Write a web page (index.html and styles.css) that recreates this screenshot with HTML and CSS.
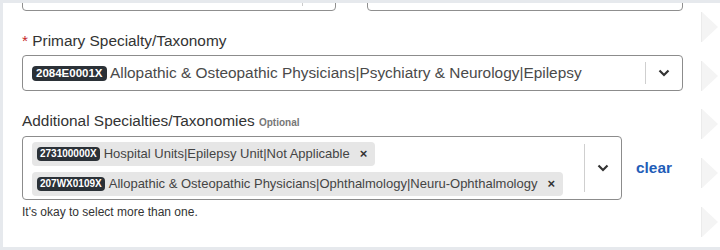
FILE: index.html
```html
<!DOCTYPE html>
<html>
<head>
<meta charset="utf-8">
<link rel="stylesheet" href="styles.css">
</head>
<body>
<div class="frame">
  <div class="panel">
    <div class="content">
      <div class="top-row">
        <div class="stub stub-a"><span class="stub-sep"></span></div>
        <div class="stub stub-b"></div>
      </div>

      <div class="label"><span class="req">*</span> Primary Specialty/Taxonomy</div>
      <div class="select">
        <div class="value"><span class="code">2084E0001X</span> Allopathic &amp; Osteopathic Physicians|Psychiatry &amp; Neurology|Epilepsy</div>
        <span class="sep"></span>
        <span class="chev"><svg width="12" height="8" viewBox="0 0 12 8"><path d="M1.5 1.5 L6 6 L10.5 1.5" fill="none" stroke="#333" stroke-width="2.2"/></svg></span>
      </div>

      <div class="label label-2">Additional Specialties/Taxonomies <span class="opt">Optional</span></div>
      <div class="multi-row">
        <div class="multi">
          <div class="chips">
            <div class="chip"><span class="code sm">273100000X</span> Hospital Units|Epilepsy Unit|Not Applicable <span class="x">×</span></div>
            <div class="chip"><span class="code sm">207WX0109X</span> Allopathic &amp; Osteopathic Physicians|Ophthalmology|Neuru-Ophthalmology <span class="x">×</span></div>
          </div>
          <span class="sep sep-tall"></span>
          <span class="chev"><svg width="12" height="8" viewBox="0 0 12 8"><path d="M1.5 1.5 L6 6 L10.5 1.5" fill="none" stroke="#333" stroke-width="2.2"/></svg></span>
        </div>
        <a class="clear">clear</a>
      </div>
      <div class="help">It's okay to select more than one.</div>
    </div>
    <div class="rail">
      <span class="tri"></span>
      <span class="tri"></span>
      <span class="tri"></span>
      <span class="tri"></span>
      <span class="tri"></span>
    </div>
  </div>
</div>
</body>
</html>
```

FILE: styles.css
```css
html, body {
  margin: 0;
  padding: 0;
}
body {
  background: #e6e9ed;
  font-family: "Liberation Sans", Arial, sans-serif;
  color: #333;
  width: 720px;
  height: 250px;
  overflow: hidden;
}
.frame {
  padding: 3px 0 3px 3px;
  height: 250px;
  box-sizing: border-box;
}
.panel {
  background: #fff;
  height: 244px;
  display: flex;
  overflow: hidden;
}
.content {
  width: 697px;
  padding-left: 19px;
  box-sizing: border-box;
}
.top-row {
  display: flex;
  gap: 31px;
  margin-top: -22px;
  width: 661px;
}
.stub {
  height: 30px;
  border: 1px solid #8f8f8f;
  border-radius: 4px;
  box-sizing: border-box;
  position: relative;
}
.stub-a { width: 314px; }
.stub-b { width: 316px; }
.stub-sep {
  position: absolute;
  left: 279px;
  top: 14px;
  width: 1px;
  height: 10px;
  background: #ccc;
}
.label {
  margin-top: 21px;
  font-size: 15.4px;
  line-height: 17px;
  height: 17px;
  color: #333;
}
.req {
  color: #c62828;
}
.select {
  margin-top: 6px;
  width: 661px;
  height: 36px;
  box-sizing: border-box;
  border: 1px solid #8c8c8c;
  border-radius: 4px;
  display: flex;
  align-items: center;
  padding-left: 9px;
}
.value {
  flex: 1;
  font-size: 15.4px;
  color: #4a4a4a;
  white-space: nowrap;
}
.code {
  display: inline-block;
  background: #2b3137;
  color: #fff;
  font-weight: bold;
  font-size: 11.5px;
  line-height: 15px;
  padding: 0 4px;
  border-radius: 4px;
  vertical-align: 1px;
}
.code.sm {
  font-size: 10px;
  line-height: 14px;
  padding: 0 3px;
}
.sep {
  width: 1px;
  height: 22px;
  background: #cfcfcf;
}
.chev {
  width: 36px;
  display: flex;
  justify-content: center;
  align-items: center;
}
.label-2 {
  margin-top: 21px;
}
.opt {
  font-size: 10px;
  line-height: 10px;
  font-weight: bold;
  color: #777;
}
.multi-row {
  margin-top: 7px;
  display: flex;
  align-items: center;
}
.multi {
  width: 600px;
  height: 64px;
  box-sizing: border-box;
  border: 1px solid #8c8c8c;
  border-radius: 4px;
  display: flex;
  align-items: center;
  padding-left: 9px;
}
.chips {
  flex: 1;
  min-width: 0;
  display: flex;
  flex-direction: column;
  align-items: flex-start;
  gap: 6px;
  padding-top: 1px;
}
.chip {
  background: #e6e6e6;
  border-radius: 4px;
  height: 24px;
  display: flex;
  align-items: center;
  gap: 4px;
  padding: 0 8px 0 5px;
  font-size: 13px;
  color: #444;
  white-space: nowrap;
}
.x {
  font-weight: bold;
  color: #333;
  font-size: 13px;
  margin-left: 6px;
}
.sep-tall {
  height: 48px;
}
.chev-m {
  width: 35px;
}
.clear {
  margin-left: 14px;
  color: #1f5db8;
  font-weight: bold;
  font-size: 15.4px;
}
.help {
  margin-top: 5px;
  font-size: 12px;
  line-height: 14px;
  color: #333;
}
.rail {
  flex: 1;
  display: flex;
  flex-direction: column;
  gap: 18.7px;
  padding-top: 9px;
  padding-left: 2px;
}
.tri {
  display: block;
  width: 0;
  height: 0;
  border-top: 15px solid transparent;
  border-bottom: 15px solid transparent;
  border-left: 16px solid #f4f4f4;
  box-shadow: -1px 0 0 #ebebeb;
}
```
